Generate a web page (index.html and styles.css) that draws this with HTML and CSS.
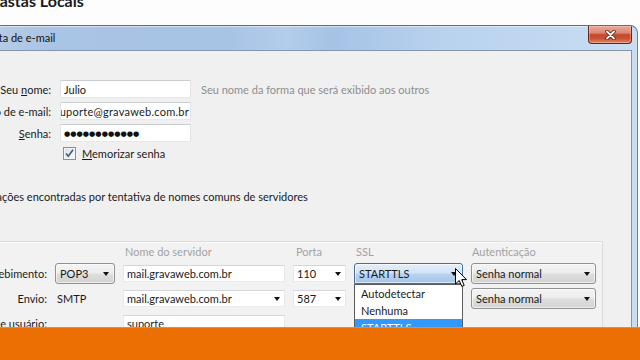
FILE: index.html
```html
<!DOCTYPE html>
<html lang="pt-BR">
<head>
<meta charset="utf-8">
<title>Configuração da conta de e-mail</title>
<link rel="stylesheet" href="styles.css">
</head>
<body>
<div class="page">
  <header class="desk">
    <h1 class="desk-title">Pastas Locais</h1>
  </header>
  <div class="window">
    <div class="titlebar">
      <span class="title">Configuração da conta de e-mail</span>
      <div class="close">
        <svg width="11" height="10" viewBox="0 0 11 10"><path d="M2 1.5 L9 8.5 M9 1.5 L2 8.5" stroke="#5a1a10" stroke-width="3.4" stroke-linecap="round"/><path d="M2 1.5 L9 8.5 M9 1.5 L2 8.5" stroke="#fff" stroke-width="1.8" stroke-linecap="round"/></svg>
      </div>
    </div>
    <div class="client">
      <div class="form">
        <div class="lbl"><span>Seu <u>n</u>ome:</span></div>
        <div class="field">Julio</div>
        <div class="hint">Seu nome da forma que será exibido aos outros</div>

        <div class="lbl"><span>Endereço de e-mail:</span></div>
        <div class="field field-end"><span class="email">suporte@gravaweb.com.br</span></div>
        <div></div>

        <div class="lbl"><span><u>S</u>enha:</span></div>
        <div class="field"><span class="dots">●●●●●●●●●●●●</span></div>
        <div></div>

        <div class="check-row">
          <span class="checkbox"><svg width="11" height="11" viewBox="0 0 11 11"><path d="M2 5.5 L4.3 8.3 L9 1.8" fill="none" stroke="#3d5a8c" stroke-width="1.6"/></svg></span>
          <span><u>M</u>emorizar senha</span>
        </div>
      </div>

      <p class="found">Configurações encontradas por tentativa de nomes comuns de servidores</p>

      <div class="panel">
        <div class="grid">
          <div></div>
          <div></div>
          <div class="head head-host">Nome do servidor</div>
          <div class="head head-port">Porta</div>
          <div class="head head-ssl">SSL</div>
          <div class="head">Autenticação</div>

          <div class="lbl"><span>Recebimento:</span></div>
          <div class="select"><span>POP3</span><i class="tri"></i></div>
          <div class="cell"><div class="box">mail.gravaweb.com.br</div></div>
          <div class="cell"><div class="box combo"><span>110</span><i class="tri"></i></div></div>
          <div class="ssl-wrap">
            <div class="select select-open"><span>STARTTLS</span><i class="tri"></i></div>
            <ul class="list">
              <li>Autodetectar</li>
              <li>Nenhuma</li>
              <li class="sel">STARTTLS</li>
              <li>SSL/TLS</li>
            </ul>
            <svg class="cursor" width="13" height="20" viewBox="0 0 13 20"><path d="M0.5 0.5 L0.5 16 L4.2 12.4 L6.8 18.4 L9.2 17.4 L6.7 11.6 L11.5 11.6 Z" fill="#fff" stroke="#000" stroke-width="1" stroke-linejoin="round"/></svg>
          </div>
          <div class="select"><span>Senha normal</span><i class="tri"></i></div>

          <div class="lbl"><span>Envio:</span></div>
          <div class="plain">SMTP</div>
          <div class="cell"><div class="box combo"><span>mail.gravaweb.com.br</span><i class="tri"></i></div></div>
          <div class="cell"><div class="box combo"><span>587</span><i class="tri"></i></div></div>
          <div></div>
          <div class="select"><span>Senha normal</span><i class="tri"></i></div>

          <div class="lbl"><span>Nome de usuário:</span></div>
          <div></div>
          <div class="cell"><div class="box">suporte</div></div>
          <div></div>
          <div></div>
          <div></div>
        </div>
      </div>
    </div>
  </div>
  <div class="strip"></div>
</div>
</body>
</html>
```
FILE: styles.css
```css
* { box-sizing: border-box; }
html, body { margin: 0; padding: 0; }
body {
  width: 640px;
  height: 360px;
  overflow: hidden;
  background: #fdfdfd;
  font-family: Lato, "Open Sans", sans-serif;
  font-size: 11px;
  color: #1a1a1a;
}
.page {
  display: flex;
  flex-direction: column;
  height: 360px;
}
.desk {
  height: 25px;
  flex: none;
  overflow: hidden;
  background: #fdfdfd;
}
.desk-title {
  margin: -7px 0 0 -10px;
  font-size: 16px;
  line-height: 16px;
  font-weight: 700;
  color: #1a1a1a;
  white-space: nowrap;
}
.window {
  height: 302px;
  flex: none;
  width: 638px;
  overflow: hidden;
  display: flex;
  flex-direction: column;
  border-top: 1px solid #5b6c83;
  border-right: 1px solid #6f8198;
  border-radius: 0 8px 0 0;
  background: linear-gradient(90deg, #b6cbe4 0%, #a9c4e4 8%, #a7c3e5 35%, #b3cdea 45%, #a6c3e6 52%, #b9d2ee 70%, #c2d9f1 88%, #c9ddf2 100%);
  position: relative;
}
.titlebar {
  height: 24px;
  flex: none;
  display: flex;
  justify-content: space-between;
  align-items: flex-start;
  box-shadow: inset 0 1px 0 rgba(255,255,255,0.5);
}
.title {
  margin-left: -100px;
  line-height: 24px;
  white-space: nowrap;
  color: #111;
}
.close {
  width: 44px;
  height: 18px;
  margin-right: 5px;
  border: 1px solid #6a2517;
  border-top: none;
  border-radius: 0 0 4px 4px;
  background: linear-gradient(#e9aa98 0%, #dc8874 40%, #c6462c 52%, #cc5234 75%, #e08a6a 100%);
  display: flex;
  align-items: center;
  justify-content: center;
  box-shadow: inset 0 0 0 1px rgba(255,220,210,0.35);
}
.client {
  flex: 1;
  margin-right: 5px;
  border-top: 1px solid #8595aa;
  border-right: 1px solid #8595aa;
  background: #f0f0f0;
  display: flex;
  flex-direction: column;
}
.form {
  margin-top: 29px;
  display: grid;
  grid-template-columns: 51px 131px auto;
  grid-auto-rows: 18px;
  column-gap: 9px;
  row-gap: 4px;
}
.lbl {
  display: flex;
  justify-content: flex-end;
  align-items: center;
  white-space: nowrap;
  color: #1a1a1a;
}
.field {
  display: flex;
  align-items: center;
  height: 18px;
  padding: 0 3px;
  background: #fff;
  border: 1px solid;
  border-color: #c9ccd1 #e3e5e8 #e6e8eb #e3e5e8;
  white-space: nowrap;
  overflow: hidden;
}
.field-end {
  justify-content: flex-end;
  padding-right: 1px;
}
.email {
  letter-spacing: 0.25px;
}
.dots {
  font-family: "DejaVu Sans", sans-serif;
  font-size: 7.2px;
  letter-spacing: 0px;
  color: #111;
}
.hint {
  margin-left: 1px;
  display: flex;
  align-items: center;
  color: #8e8e8e;
  white-space: nowrap;
}
.check-row {
  grid-column: 2 / span 2;
  margin-top: 1px;
  margin-left: 3px;
  display: flex;
  align-items: center;
  gap: 6px;
  height: 13px;
  align-self: start;
}
.checkbox {
  width: 13px;
  height: 13px;
  border: 1px solid #8e8f8f;
  background: linear-gradient(135deg, #dcdcdc, #fbfbfb);
  box-shadow: inset 0 0 0 1px #f4f4f4;
  display: flex;
  align-items: center;
  justify-content: center;
}
.found {
  margin: 25px 0 0 -45px;
  line-height: 16px;
  white-space: nowrap;
}
.panel {
  margin: 36px 28px 0 0;
  flex: 1;
  border-top: 1px solid #dcdcdc;
  border-right: 1px solid #dcdcdc;
  box-shadow: inset 0 1px 0 #fafafa;
  background: #f2f2f2;
  padding-top: 3px;
}
.grid {
  display: grid;
  grid-template-columns: 47px 60px 162px 53px 109px 125px;
  grid-template-rows: 14px 21px 21px 21px;
  column-gap: 8px;
  row-gap: 4px;
}
.head {
  color: #a2a2a2;
  line-height: 14px;
  white-space: nowrap;
  padding-left: 1px;
}
.head-host { padding-left: 2px; }
.head-port { padding-left: 3px; }
.head-ssl { padding-left: 2px; }
.select {
  height: 21px;
  display: flex;
  align-items: center;
  justify-content: space-between;
  padding: 0 5px 0 4px;
  border: 1px solid #8f9194;
  border-radius: 3px;
  background: linear-gradient(#f4f4f4 0%, #ececec 48%, #dedede 52%, #d3d3d3 100%);
  box-shadow: inset 0 0 0 1px rgba(255,255,255,0.6);
  white-space: nowrap;
}
.select-open {
  border-color: #476f98;
  border-radius: 3px 3px 0 0;
  background: linear-gradient(#e4eff9 0%, #d2e4f5 45%, #b7d3ef 55%, #a2c4e9 100%);
}
.cell {
  display: flex;
  align-items: center;
}
.box {
  flex: 1;
  height: 17px;
  display: flex;
  align-items: center;
  justify-content: space-between;
  padding: 0 5px 0 3px;
  background: #fff;
  border: 1px solid;
  border-color: #d3d6da #e6e8eb #e9ebee #e6e8eb;
  white-space: nowrap;
  overflow: hidden;
}
.combo { padding-right: 4px; }
.plain {
  display: flex;
  align-items: center;
  padding-left: 2px;
}
.tri {
  width: 0;
  height: 0;
  border-left: 3.5px solid transparent;
  border-right: 3.5px solid transparent;
  border-top: 4px solid #111;
  flex: none;
}
.ssl-wrap {
  position: relative;
}
.list {
  position: absolute;
  top: 21px;
  left: 0;
  width: 109px;
  margin: 0;
  padding: 0;
  list-style: none;
  background: #fff;
  border: 1px solid #5c5c5c;
  z-index: 2;
}
.list li {
  height: 17px;
  line-height: 17px;
  padding-left: 6px;
  white-space: nowrap;
}
.list .sel {
  background: #3399ff;
  color: #fff;
}
.cursor {
  position: absolute;
  left: 101px;
  top: 5px;
  z-index: 3;
}
.strip {
  flex: 1;
  background: #eb6f03;
  border-top: 1px solid #f0883a;
}
```
